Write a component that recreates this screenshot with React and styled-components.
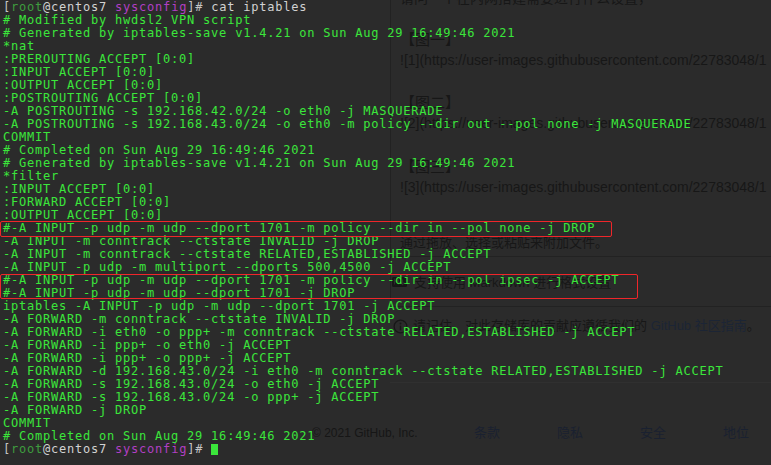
import React from "react";
import styled, { createGlobalStyle } from "styled-components";

const Global = createGlobalStyle`
  html, body { margin: 0; padding: 0; background: #2b2b2b; }
  body { overflow: hidden; }
`;

const Screen = styled.div`
  position: relative;
  width: 771px;
  height: 465px;
  overflow: hidden;
  background: #2b2b2b;
`;

/* ---------- ghosted GitHub page behind the translucent terminal ---------- */
const Backdrop = styled.div`
  display: flex;
  flex-direction: column;
  height: 100%;
  font-family: "Liberation Sans", "Noto Sans CJK SC", sans-serif;
  color: #171717;
`;

const Main = styled.div`
  display: grid;
  grid-template-columns: 390px 1fr;
`;

const Column = styled.div`
  grid-column: 2;
  height: 383px;
  box-sizing: border-box;
  border-bottom: 1px solid #303030;
  display: flex;
  flex-direction: column;
`;

const Editor = styled.div`
  height: 257px;
  box-sizing: border-box;
  border-left: 1px solid #222;
  border-bottom: 1px solid #222;
  padding-left: 9px;
  overflow: hidden;
`;

const GhostLine = styled.div`
  font-size: ${(p) => p.$size || 14}px;
  line-height: 20px;
  white-space: nowrap;
  margin-top: ${(p) => p.$mt || 0}px;
`;

const Figure = styled.div`
  margin-top: ${(p) => p.$mt}px;
`;

const ToolRow = styled.div`
  height: 50px;
  box-sizing: border-box;
  border-left: 1px solid #222;
  border-bottom: 1px solid #222;
  display: flex;
  align-items: center;
  gap: 7px;
  padding-left: 1px;
  font-size: 13px;
`;

const GuideRow = styled.div`
  display: flex;
  align-items: center;
  gap: 5px;
  padding: 9px 0 0 3px;
  font-size: 13px;
  line-height: 20px;
`;

const Link = styled.span`
  color: #1c2535;
`;

const Footer = styled.div`
  display: grid;
  grid-template-columns: 162px repeat(4, 83px);
  padding: 40px 0 0 312px;
  font-size: 12px;
  line-height: 20px;
  color: #161616;
`;

const FooterLink = styled.span`
  color: #1a2130;
  font-size: 13px;
`;

const MarkdownIcon = () => (
  <svg width="15" height="10" viewBox="0 0 15 10">
    <rect x="0" y="0" width="15" height="10" rx="1.5" fill="#161616" />
    <path d="M2.5 7.5V2.5l2 2.5 2-2.5v5M10.5 2.5v4.5M8.8 5.5l1.7 2 1.7-2" stroke="#2b2b2b" strokeWidth="1.2" fill="none" />
  </svg>
);

const InfoIcon = () => (
  <svg width="15" height="15" viewBox="0 0 16 16">
    <circle cx="8" cy="8" r="6.8" stroke="#171717" strokeWidth="1.3" fill="none" />
    <circle cx="8" cy="4.8" r="1" fill="#171717" />
    <path d="M8 7v5" stroke="#171717" strokeWidth="1.5" />
  </svg>
);

/* ---------- terminal ---------- */
const Terminal = styled.div`
  position: absolute;
  inset: 0;
  padding: 1px 0 0 3px;
  font-family: "DejaVu Sans Mono", monospace;
  font-size: 12px;
  letter-spacing: 0.78px;
  line-height: 13px;
  color: #3be63b;
`;

const Line = styled.div`
  white-space: pre;
  height: 13px;
`;

const Part = styled.span`
  color: ${(p) => p.$color};
`;

const Cursor = styled.span`
  display: inline-block;
  width: 7px;
  height: 11px;
  background: #3be63b;
  vertical-align: -2px;
`;

const Highlight = styled.div`
  position: relative;
  &::before {
    content: "";
    position: absolute;
    left: -3px;
    top: ${(p) => p.$top}px;
    bottom: ${(p) => p.$bottom}px;
    width: ${(p) => p.$width}px;
    border: 1px solid #f0262a;
    border-radius: 2px;
    box-sizing: border-box;
    pointer-events: none;
  }
`;

const Prompt = ({ children }) => (
  <Line>
    <Part $color="#c4c4c4">[</Part>
    <Part $color="#3e9c3e">root</Part>
    <Part $color="#d2d2d2">@centos7 </Part>
    <Part $color="#b23fc4">sysconfig</Part>
    <Part $color="#c4c4c4">]# </Part>
    {children}
  </Line>
);

const before = [
  "# Modified by hwdsl2 VPN script",
  "# Generated by iptables-save v1.4.21 on Sun Aug 29 16:49:46 2021",
  "*nat",
  ":PREROUTING ACCEPT [0:0]",
  ":INPUT ACCEPT [0:0]",
  ":OUTPUT ACCEPT [0:0]",
  ":POSTROUTING ACCEPT [0:0]",
  "-A POSTROUTING -s 192.168.42.0/24 -o eth0 -j MASQUERADE",
  "-A POSTROUTING -s 192.168.43.0/24 -o eth0 -m policy --dir out --pol none -j MASQUERADE",
  "COMMIT",
  "# Completed on Sun Aug 29 16:49:46 2021",
  "# Generated by iptables-save v1.4.21 on Sun Aug 29 16:49:46 2021",
  "*filter",
  ":INPUT ACCEPT [0:0]",
  ":FORWARD ACCEPT [0:0]",
  ":OUTPUT ACCEPT [0:0]",
];

const box1 = ["#-A INPUT -p udp -m udp --dport 1701 -m policy --dir in --pol none -j DROP"];

const middle = [
  "-A INPUT -m conntrack --ctstate INVALID -j DROP",
  "-A INPUT -m conntrack --ctstate RELATED,ESTABLISHED -j ACCEPT",
  "-A INPUT -p udp -m multiport --dports 500,4500 -j ACCEPT",
];

const box2 = [
  "#-A INPUT -p udp -m udp --dport 1701 -m policy --dir in --pol ipsec -j ACCEPT",
  "#-A INPUT -p udp -m udp --dport 1701 -j DROP",
];

const after = [
  "iptables -A INPUT -p udp -m udp --dport 1701 -j ACCEPT",
  "-A FORWARD -m conntrack --ctstate INVALID -j DROP",
  "-A FORWARD -i eth0 -o ppp+ -m conntrack --ctstate RELATED,ESTABLISHED -j ACCEPT",
  "-A FORWARD -i ppp+ -o eth0 -j ACCEPT",
  "-A FORWARD -i ppp+ -o ppp+ -j ACCEPT",
  "-A FORWARD -d 192.168.43.0/24 -i eth0 -m conntrack --ctstate RELATED,ESTABLISHED -j ACCEPT",
  "-A FORWARD -s 192.168.43.0/24 -o eth0 -j ACCEPT",
  "-A FORWARD -s 192.168.43.0/24 -o ppp+ -j ACCEPT",
  "-A FORWARD -j DROP",
  "COMMIT",
  "# Completed on Sun Aug 29 16:49:46 2021",
];

const renderLines = (arr) => arr.map((t, i) => <Line key={i}>{t}</Line>);

const figures = [
  { mt: 22, label: "【图一】", n: 1 },
  { mt: 23, label: "【图二】", n: 2 },
  { mt: 24, label: "【图三】", n: 3 },
];

export default function App() {
  return (
    <>
      <Global />
      <Screen>
        <Backdrop>
          <Main>
            <Column>
              <Editor>
                <GhostLine $mt={-12}>请问一个在内网搭建需要进行什么设置，</GhostLine>
                {figures.map((f) => (
                  <Figure key={f.n} $mt={f.mt}>
                    <GhostLine $size={15}>{f.label}</GhostLine>
                    <GhostLine>{`![${f.n}](https://user-images.githubusercontent.com/22783048/1`}</GhostLine>
                  </Figure>
                ))}
                <GhostLine $size={13} $mt={36}>通过拖放、选择或粘贴来附加文件。</GhostLine>
              </Editor>
              <ToolRow>
                <MarkdownIcon />
                <span>支持使用 Markdown 进行格式设置</span>
              </ToolRow>
              <GuideRow>
                <InfoIcon />
                <span>
                  请记住，对此存储库的贡献应遵循我们的 <Link>GitHub 社区指南</Link>。
                </span>
              </GuideRow>
            </Column>
          </Main>
          <Footer>
            <span>© 2021 GitHub, Inc.</span>
            <FooterLink>条款</FooterLink>
            <FooterLink>隐私</FooterLink>
            <FooterLink>安全</FooterLink>
            <FooterLink>地位</FooterLink>
          </Footer>
        </Backdrop>

        <Terminal>
          <Prompt>
            <Part $color="#d2d2d2">cat iptables</Part>
          </Prompt>
          {renderLines(before)}
          <Highlight $width={612} $top={-1} $bottom={-2}>
            {renderLines(box1)}
          </Highlight>
          {renderLines(middle)}
          <Highlight $width={638} $top={0} $bottom={1}>
            {renderLines(box2)}
          </Highlight>
          {renderLines(after)}
          <Prompt>
            <Cursor />
          </Prompt>
        </Terminal>
      </Screen>
    </>
  );
}
